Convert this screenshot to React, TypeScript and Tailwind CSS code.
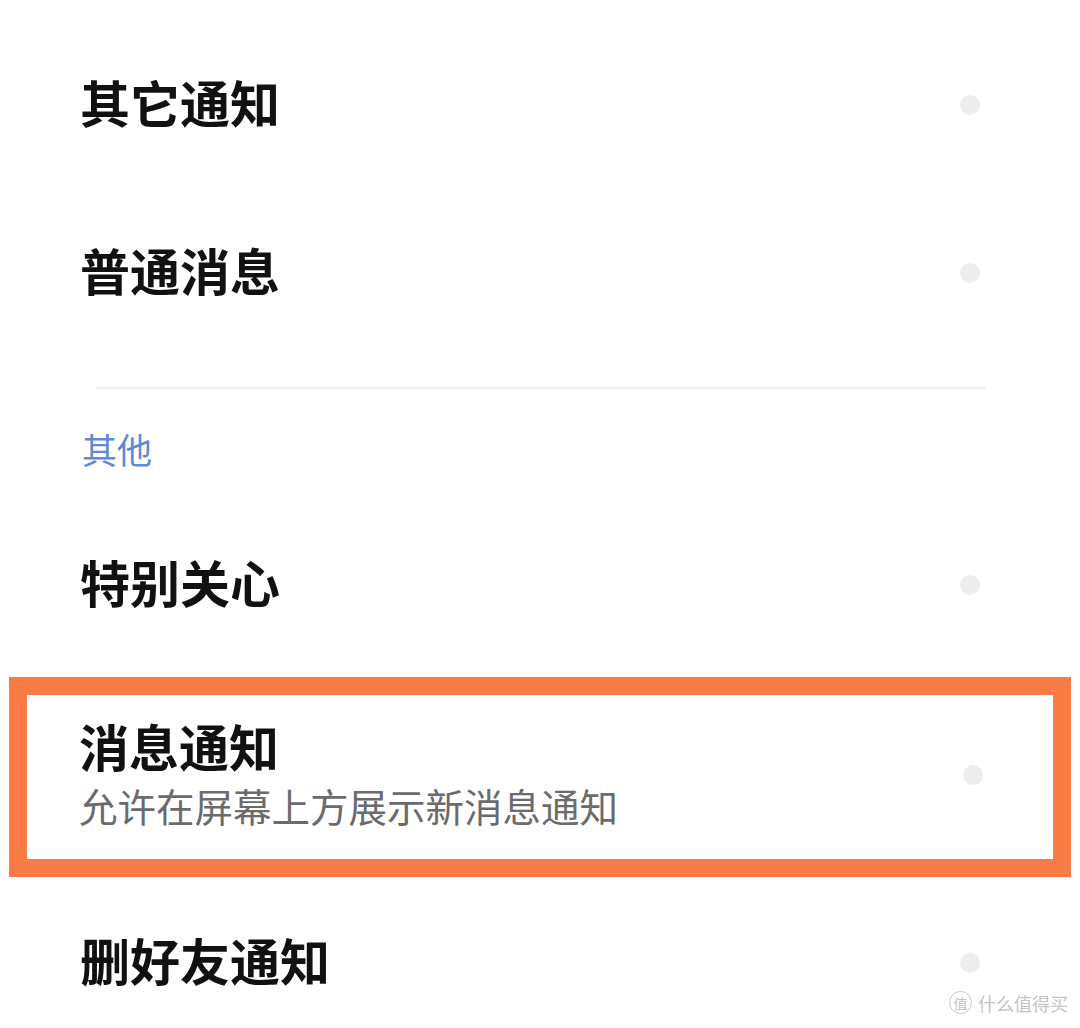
import React from 'react';

const font = { fontFamily: '"Noto Sans CJK SC", "Noto Sans", sans-serif' };

const Dot = () => <div className="h-[20px] w-[20px] shrink-0 rounded-full bg-[#ededed]" />;

interface RowProps {
  title: string;
  height: string;
}

const Row: React.FC<RowProps> = ({ title, height }) => (
  <div className={`flex items-center justify-between pl-[80px] pr-[100px] ${height}`}>
    <span className="mb-[8px] text-[50px] font-bold leading-none text-[#111111]">{title}</span>
    <Dot />
  </div>
);

export default function App() {
  return (
    <div className="relative h-[1028px] w-[1080px] overflow-hidden bg-white pt-[21px]" style={font}>
      <Row title="其它通知" height="h-[168px]" />
      <Row title="普通消息" height="h-[168px]" />

      <div className="pt-[30px] pl-[96px] pr-[94px]">
        <div className="h-[2px] bg-[#f2f2f2]" />
      </div>

      <div className="flex h-[122px] items-center pb-[4px] pl-[82px]">
        <span className="text-[35px] leading-none text-[#5d8ad6]">其他</span>
      </div>

      <Row title="特别关心" height="h-[148px]" />

      <div className="mx-[9px] mt-[18px] flex h-[200px] items-center justify-between border-[18px] border-[#f87c43] pl-[52px] pr-[70px]">
        <div className="mb-[9px] flex flex-col">
          <span className="text-[50px] font-bold leading-none text-[#111111]">消息通知</span>
          <span className="mt-[16px] text-[38.5px] leading-none text-[#6b6b6b]">允许在屏幕上方展示新消息通知</span>
        </div>
        <div className="mb-[5px]">
          <Dot />
        </div>
      </div>

      <Row title="删好友通知" height="h-[172px]" />

      <div className="absolute right-[12px] bottom-[14px] flex items-center gap-[6px] text-[#c4c4c4]">
        <div className="flex h-[23px] w-[23px] items-center justify-center rounded-full border-[1.5px] border-[#c8c8c8] text-[14px] leading-none">
          值
        </div>
        <span className="text-[18px] leading-none">什么值得买</span>
      </div>
    </div>
  );
}
